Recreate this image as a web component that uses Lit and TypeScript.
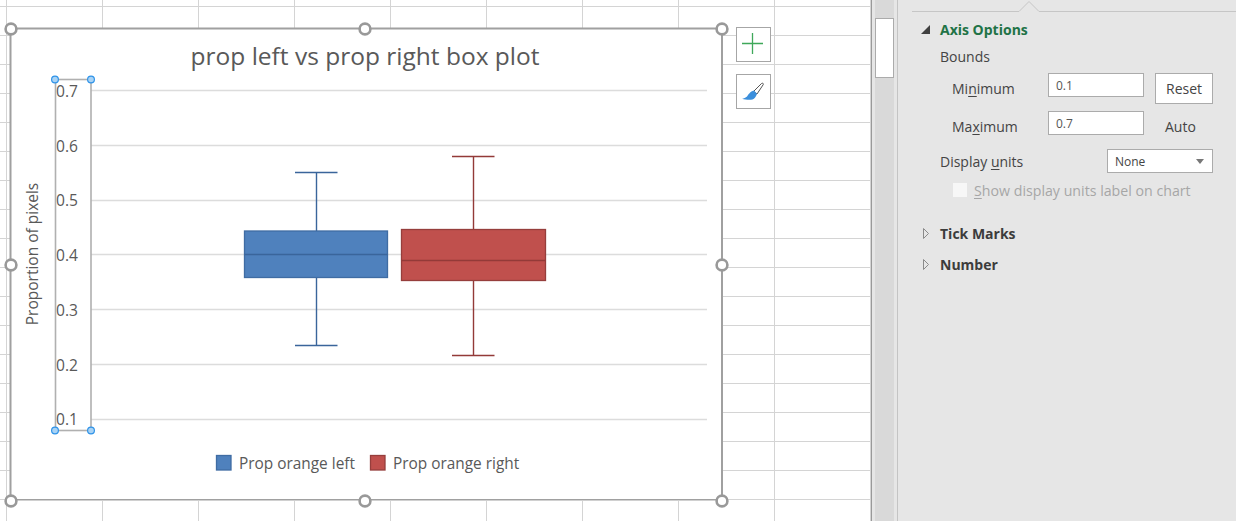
import { LitElement, html, css, svg } from "lit";
import { customElement } from "lit/decorators.js";

const TICKS = [
  { label: "0.7", y: 90.5, base: 97 },
  { label: "0.6", y: 145.5, base: 152 },
  { label: "0.5", y: 200.5, base: 206 },
  { label: "0.4", y: 254.5, base: 261 },
  { label: "0.3", y: 309.5, base: 316 },
  { label: "0.2", y: 364.5, base: 371 },
  { label: "0.1", y: 419.5, base: 425 },
];
const BOXES = [
  { cls: "blue", x1: 244.5, x2: 387.5, q3: 231, q1: 277.5, med: 254.5, cx: 316.5, hi: 172.5, lo: 345.5 },
  { cls: "red", x1: 401.5, x2: 545.5, q3: 229.5, q1: 280.5, med: 260.5, cx: 473.5, hi: 156.5, lo: 355.5 },
];
const HANDLES = [[11, 29], [365, 29], [722, 29], [11, 265], [722, 265], [11, 501], [365, 501], [722, 501]];
const AXIS_HANDLES = [[55, 79.5], [91, 79.5], [55, 430.5], [91, 430.5]];

@customElement("chart-overlay")
class ChartOverlay extends LitElement {
  static styles = css`
    :host { position: absolute; inset: 0; display: block; }
    svg.canvas { position: absolute; left: 0; top: 0; width: 872px; height: 521px; }
    text { font-family: "Open Sans", "Noto Sans", sans-serif; fill: #595959; }
    .title { font-size: 24.5px; }
    .tick { font-size: 15.6px; }
    .axis-title { font-size: 15.5px; }
    .legend { font-size: 15.4px; }
    .area { fill: #fff; stroke: #a0a0a0; stroke-width: 2; }
    .grid { stroke: #dcdcdc; stroke-width: 1.6; }
    .axis-box { fill: none; stroke: #b0b0b0; stroke-width: 1.6; }
    .handle { fill: #fff; stroke: #999; stroke-width: 2.6; }
    .axis-handle { fill: #a9d3f5; stroke: #2f93e8; stroke-width: 1.2; }
    .blue .fill { fill: #4f81bd; stroke: #3f6ca3; stroke-width: 1.3; }
    .red .fill { fill: #c0504d; stroke: #963e3c; stroke-width: 1.3; }
    .blue .line { stroke: #3a659b; stroke-width: 1.4; }
    .red .line { stroke: #933a38; stroke-width: 1.4; }
    .tool {
      position: absolute; left: 736px; width: 35px; height: 35px; box-sizing: border-box;
      background: #fff; border: 1px solid #a6a6a6; display: flex; align-items: center; justify-content: center;
    }
    .plus { top: 27px; }
    .plus svg { margin: 0 2px 3px 0; }
    .brush { top: 74px; }
  `;

  render() {
    return html`
      <svg class="canvas" viewBox="0 0 872 521">
        <rect class="area" x="10.5" y="28.5" width="711.5" height="471.5"></rect>
        <line x1="12" y1="500.5" x2="721" y2="500.5" stroke="#d0d0d0" stroke-width="1"></line>
        <text class="title" x="365" y="65" text-anchor="middle">prop left vs prop right box plot</text>
        ${TICKS.map((t) => svg`
          <line class="grid" x1="91" x2="707" y1=${t.y} y2=${t.y}></line>
          <text class="tick" x="56" y=${t.base}>${t.label}</text>`)}
        <rect class="axis-box" x="55.5" y="79.5" width="35.5" height="351"></rect>
        ${AXIS_HANDLES.map(([x, y]) => svg`<circle class="axis-handle" cx=${x} cy=${y} r="3.4"></circle>`)}
        <text class="axis-title" transform="translate(38 254) rotate(-90)" text-anchor="middle">Proportion of pixels</text>
        ${BOXES.map((b) => svg`
          <g class=${b.cls}>
            <line class="line" x1=${b.cx} x2=${b.cx} y1=${b.hi} y2=${b.q3}></line>
            <line class="line" x1=${b.cx} x2=${b.cx} y1=${b.q1} y2=${b.lo}></line>
            <line class="line" x1=${b.cx - 21.5} x2=${b.cx + 21} y1=${b.hi} y2=${b.hi}></line>
            <line class="line" x1=${b.cx - 21.5} x2=${b.cx + 21} y1=${b.lo} y2=${b.lo}></line>
            <rect class="fill" x=${b.x1} y=${b.q3} width=${b.x2 - b.x1} height=${b.q1 - b.q3}></rect>
            <line class="line" x1=${b.x1} x2=${b.x2} y1=${b.med} y2=${b.med}></line>
          </g>`)}
        <g class="blue"><rect class="fill" x="216.5" y="455.5" width="14.5" height="14.5"></rect></g>
        <text class="legend" x="239" y="468.5">Prop orange left</text>
        <g class="red"><rect class="fill" x="370.5" y="455.5" width="14.5" height="14.5"></rect></g>
        <text class="legend" x="393" y="468.5">Prop orange right</text>
        ${HANDLES.map(([x, y]) => svg`<circle class="handle" cx=${x} cy=${y} r="5.4"></circle>`)}
      </svg>
      <div class="tool plus">
        <svg width="21" height="21" viewBox="0 0 21 21"><path d="M10.500 0v21M0 10.500h21" stroke="#3fa85a" stroke-width="1.300" fill="none"></path></svg>
      </div>
      <div class="tool brush">
        <svg width="24" height="24" viewBox="0 0 24 24">
          <path d="M11.500 11.500 19.500 3.500c1-.8 2.200 0 1.800 1L15 14z" fill="#fff" stroke="#555" stroke-width="1"></path>
          <path d="M12 10.500C8 11.500 6.500 14.500 5 16.500 4 17.800 1.500 18.500.2 18.800c2.800 1 7.800 1.200 10.300.7 2-.7 3.500-3 4.500-5.500z" fill="#3b8fdc"></path>
        </svg>
      </div>
    `;
  }
}

@customElement("format-pane")
class FormatPane extends LitElement {
  static styles = css`
    :host {
      display: block; width: 339px; height: 521px; box-sizing: border-box;
      background: #e6e6e6; border-left: 1px solid #c4c4c4;
      font-family: "Open Sans", "Noto Sans", sans-serif; font-size: 14px; color: #444;
      overflow: hidden;
    }
    .top { display: block; margin-left: 14px; }
    .body { padding: 0 23px 0 25px; display: flex; flex-direction: column; }
    .head { display: flex; align-items: center; gap: 10px; height: 20px; font-weight: 700; font-size: 14px; }
    .head svg { flex: none; width: 7px; height: 11px; }
    .head.open { margin-top: 6px; color: #217346; }
    .head.open svg { width: 9px; height: 9px; margin-left: -2px; }
    .head.tick { margin-top: 26px; color: #3c3c3c; }
    .head.num { margin-top: 11px; color: #3c3c3c; }
    .label { margin: 8px 0 0 17px; height: 20px; line-height: 20px; }
    .bounds { margin: 6px 0 0 29px; display: grid; grid-template-columns: 96px 96px 58px; }
    .row-label { height: 24px; line-height: 32px; }
    .field {
      box-sizing: border-box; height: 24px; width: 96px; background: #fff; border: 1px solid #ababab;
      font-size: 12px; line-height: 23px; padding-left: 7px; color: #555;
    }
    .reset {
      box-sizing: border-box; margin-left: 11px; width: 58px; height: 31px; background: #fff; border: 1px solid #ababab;
      display: flex; align-items: center; justify-content: center; color: #444;
    }
    .auto { margin-left: 21px; line-height: 32px; height: 24px; }
    .bounds.second { margin-top: 7px; }
    .units { display: flex; align-items: center; justify-content: space-between; margin: 14px 0 0 17px; height: 24px; }
    .select {
      box-sizing: border-box; width: 106px; height: 24px; background: #fff; border: 1px solid #ababab;
      display: flex; align-items: center; justify-content: space-between; padding: 0 8px 0 7px; font-size: 12px; color: #444;
    }
    .arrow { width: 0; height: 0; border-left: 4.5px solid transparent; border-right: 4.5px solid transparent; border-top: 5px solid #777; }
    .check { display: flex; align-items: center; gap: 7px; margin: 10px 0 0 30px; height: 14px; color: #a6a6a6; font-size: 14.2px; }
    .box { width: 14px; height: 14px; background: #f7f7f7; flex: none; }
    u { text-underline-offset: 2px; text-decoration-thickness: 1px; }
  `;

  render() {
    const open = html`<svg viewBox="0 0 9 9"><path d="M9 0v9H0z" fill="#404040"></path></svg>`;
    const closed = html`<svg viewBox="0 0 7 11"><path d="M.5.5l5 5-5 5z" fill="none" stroke="#8a8a8a"></path></svg>`;
    return html`
      <svg class="top" width="325" height="13" viewBox="0 0 325 13">
        <path d="M0 11.500h107l10-10 10 10h198" fill="none" stroke="#c6c6c6"></path>
      </svg>
      <div class="body">
        <div class="head open">${open}<span>Axis Options</span></div>
        <div class="label">Bounds</div>
        <div class="bounds">
          <div class="row-label">Mi<u>n</u>imum</div>
          <div class="field">0.1</div>
          <div class="reset">Reset</div>
        </div>
        <div class="bounds second">
          <div class="row-label">Ma<u>x</u>imum</div>
          <div class="field">0.7</div>
          <div class="auto">Auto</div>
        </div>
        <div class="units"><span>Display <u>u</u>nits</span><div class="select"><span>None</span><span class="arrow"></span></div></div>
        <div class="check"><span class="box"></span><span><u>S</u>how display units label on chart</span></div>
        <div class="head tick">${closed}<span>Tick Marks</span></div>
        <div class="head num">${closed}<span>Number</span></div>
      </div>
    `;
  }
}

@customElement("app-root")
class AppRoot extends LitElement {
  static styles = css`
    :host { display: flex; width: 1236px; height: 521px; overflow: hidden; background: #fff; }
    .sheet {
      position: relative; flex: none; width: 872px; height: 521px; box-sizing: border-box;
      border-right: 1px solid #9a9a9a;
      background-color: #fff;
      background-image:
        repeating-linear-gradient(to right, transparent 0, transparent 6px, #d4d4d4 6px, #d4d4d4 7px, transparent 7px, transparent 96px),
        repeating-linear-gradient(to bottom, transparent 0, transparent 6px, #d4d4d4 6px, #d4d4d4 7px, transparent 7px, transparent 29px);
    }
    .scroll { flex: none; width: 25px; height: 521px; background: #e6e6e6; padding-left: 3px; box-sizing: border-box; }
    .track { width: 19px; height: 100%; background: #d9d9d9; padding-top: 18px; box-sizing: border-box; }
    .thumb { width: 19px; height: 60px; box-sizing: border-box; background: #fff; border: 1px solid #ababab; }
  `;

  render() {
    return html`
      <div class="sheet"><chart-overlay></chart-overlay></div>
      <div class="scroll"><div class="track"><div class="thumb"></div></div></div>
      <format-pane></format-pane>
    `;
  }
}
